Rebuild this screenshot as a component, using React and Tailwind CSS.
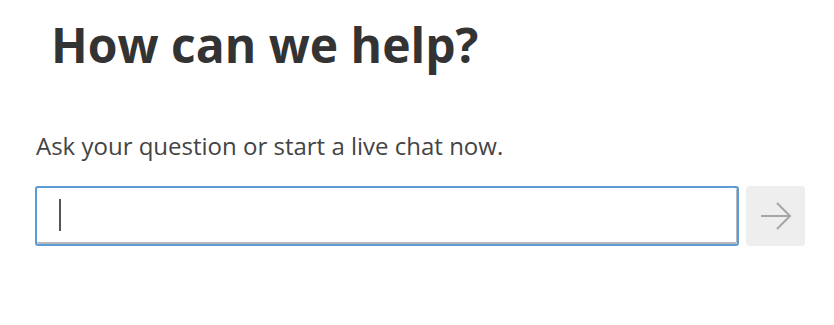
import React, { useState } from 'react'

export default function App() {
  const [q, setQ] = useState('')
  return (
    <div className="w-[834px] h-[325px] bg-white font-['Open_Sans',sans-serif]">
      <div className="pl-[35px] pr-[29px] pt-[13px]">
        <h1 className="pl-[16px] text-[48px] leading-[64px] font-bold text-[#333333]">How can we help?</h1>
        <p className="mt-[53px] pl-px text-[24px] leading-[32px] text-[#444444]">Ask your question or start a live chat now.</p>
        <div className="mt-[24px] flex gap-[7px]">
          <div className="flex-1 h-[60px] rounded-[3px] border-2 border-[#5b9bd8]">
            <div className="h-full rounded-[2px] border-b-2 border-r border-[#b8b8b8] flex items-center pl-[22px]">
              <div className="w-[2px] h-[32px] bg-[#555555]" />
              <input
                className="sr-only"
                value={q}
                onChange={(e) => setQ(e.target.value)}
              />
            </div>
          </div>
          <button className="w-[59px] h-[60px] rounded-[4px] bg-[#eeeeee] flex items-center justify-center text-[#a5a5a5]">
            <svg width="32" height="28" viewBox="0 0 32 28" fill="none" stroke="currentColor" strokeWidth="2">
              <path d="M1 14h29M17 1l13 13-13 13" />
            </svg>
          </button>
        </div>
      </div>
    </div>
  )
}
